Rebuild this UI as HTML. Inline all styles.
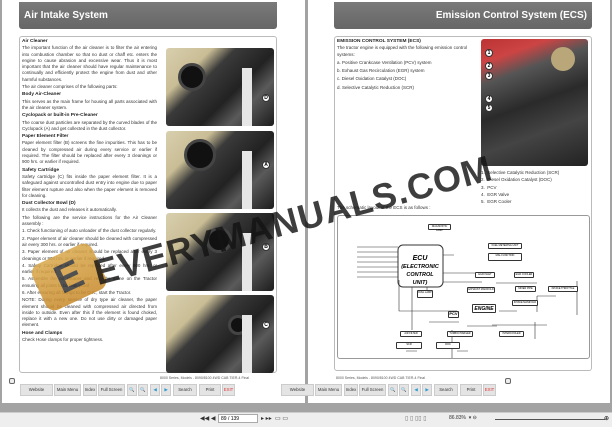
<!DOCTYPE html>
<html><head><meta charset="utf-8"><style>
*{margin:0;padding:0;box-sizing:border-box}
body{width:612px;height:427px;overflow:hidden;background:#a3a3a3;font-family:"Liberation Sans",sans-serif;position:relative}
.abs{position:absolute}
.page{position:absolute;top:0;background:#fff;height:403px}
.hdr{position:absolute;top:2px;height:27px;background:linear-gradient(#7a7a7a,#666);border-radius:0 0 3px 3px;color:#fff;font-weight:bold;font-size:10px;line-height:27px;padding:0 5px}
.box{position:absolute;border:1px solid #bbb;border-radius:3px}
.t{position:absolute;font-size:4.5px;line-height:6.3px;color:#333;text-align:justify}
.t b{font-size:4.8px;color:#222;display:block;margin-top:2px}
.t p{margin-bottom:1px}
.ph{position:absolute;border-radius:3px;overflow:hidden;background:linear-gradient(135deg,#d8cfae 0%,#c9bd95 25%,#3a3a3a 38%,#222 60%,#5a5a5a 75%,#1c1c1c 100%)}
.ph i{position:absolute;background:#e6e6e6;width:10px;top:20px;bottom:0;right:22px}
.ph u{position:absolute;border-radius:50%;background:#111;border:3px solid #444}
.lab{position:absolute;width:8px;height:8px;border-radius:50%;background:#fff;border:1px solid #333;font-size:5px;line-height:6px;text-align:center;font-weight:bold}
.tb{position:absolute;top:384px;height:12px}
.tb span{position:absolute;top:0;height:12px;background:#e4e4e4;border:1px solid #ccc;font-size:4.3px;line-height:10px;color:#333;text-align:center;white-space:nowrap;overflow:hidden}
.ft{position:absolute;top:376px;font-size:3.5px;color:#555}
.d{position:absolute;border:0.6px solid #333;border-radius:1px;font-size:2.5px;text-align:center;background:#fff;line-height:4px}
</style></head><body>
<!-- left page -->
<div class="page" style="left:2px;width:303px"></div>
<div class="hdr" style="left:19px;width:258px">Air Intake System</div>
<div class="box" style="left:19px;top:36px;width:258px;height:337px"></div>
<div class="t" style="left:22px;top:39px;width:135px">
<b style="margin-top:0">Air Cleaner</b>
<p>The important function of the air cleaner is to filter the air entering into combustion chamber so that no dust or chaff etc. enters the engine to cause abrasion and excessive wear. Thus it is most important that the air cleaner should have regular maintenance to continually and efficiently protect the engine from dust and other harmful substances.</p>
<p>The air cleaner comprises of the following parts:</p>
<b>Body Air-Cleaner</b>
<p>This serves as the main frame for housing all parts associated with the air cleaner system.</p>
<b>Cyclopack or built-in Pre-Cleaner</b>
<p>The coarse dust particles are separated by the curved blades of the Cyclopack (A) and get collected in the dust collector.</p>
<b>Paper Element Filter</b>
<p>Paper element filter (B) screens the fine impurities. This has to be cleaned by compressed air during every service or earlier if required. The filter should be replaced after every 3 cleanings or 900 hrs. or earlier if required.</p>
<b>Safety Cartridge</b>
<p>Safety cartridge (C) fits inside the paper element filter. It is a safeguard against uncontrolled dust entry into engine due to paper filter element rupture and also when the paper element is removed for cleaning.</p>
<b>Dust Collector Bowl (D)</b>
<p>It collects the dust and releases it automatically.</p>
<p>The following are the service instructions for the Air Cleaner assembly :</p>
<p>1. Check functioning of auto unloader of the dust collector regularly.</p>
<p>2. Paper element of air cleaner should be cleaned with compressed air every 300 hrs. or earlier if required.</p>
<p>3. Paper element of air cleaner should be replaced after every 3 cleanings or 900 hrs. or earlier if required.</p>
<p>4. Safety Cartridge should be replaced after every 900 hrs. or earlier if required.</p>
<p>5. Assemble the air cleaner and refit the same on the Tractor ensuring all joints to be leak-proof.</p>
<p>6. After ensuring all fittings to be O.K., start the Tractor.</p>
<p>NOTE: During every service of dry type air cleaner, the paper element should be cleaned with compressed air directed from inside to outside. Even after this if the element is found choked, replace it with a new one. Do not use dirty or damaged paper element.</p>
<b>Hose and Clamps</b>
<p>Check Hose clamps for proper tightness.</p>
</div>
<div class="ph" style="left:166px;top:48px;width:108px;height:78px"><u style="left:12px;top:15px;width:28px;height:28px"></u><i></i><div class="lab" style="left:96px;top:46px">D</div></div>
<div class="ph" style="left:166px;top:131px;width:108px;height:78px"><u style="left:18px;top:8px;width:32px;height:32px"></u><i></i><div class="lab" style="left:96px;top:30px">A</div></div>
<div class="ph" style="left:166px;top:213px;width:108px;height:78px"><u style="left:40px;top:14px;width:26px;height:26px"></u><i></i><div class="lab" style="left:96px;top:30px">B</div></div>
<div class="ph" style="left:166px;top:295px;width:108px;height:78px"><u style="left:62px;top:20px;width:20px;height:20px"></u><i></i><div class="lab" style="left:96px;top:26px">C</div></div>
<div class="ft" style="left:160px">8000 Series, Models - 8090/8100 4WD CAB TIER-4 Final</div>
<div class="abs" style="left:9px;top:378px;width:6px;height:6px;border:1px solid #666;border-radius:2px;background:#eee"></div>
<div class="tb" style="left:20px">
<span style="left:0;width:33px">Website</span><span style="left:34px;width:27px">Main Menu</span><span style="left:63px;width:14px">Index</span><span style="left:78px;width:27px">Full Screen</span><span style="left:107px;width:10px">🔍</span><span style="left:118px;width:10px">🔍</span><span style="left:130px;width:10px;color:#39c">◀</span><span style="left:141px;width:10px;color:#39c">▶</span><span style="left:153px;width:24px">Search</span><span style="left:179px;width:22px">Print</span><span style="left:202px;width:13px;color:#d33">EXIT</span></div>

<!-- right page -->
<div class="page" style="left:308px;width:302px"></div>
<div class="hdr" style="left:334px;width:258px;text-align:right">Emission Control System (ECS)</div>
<div class="box" style="left:334px;top:36px;width:258px;height:335px"></div>
<div class="t" style="left:337px;top:39px;width:135px;text-align:left">
<b style="margin-top:0">EMISSION CONTROL SYSTEM (ECS)</b>
<p>The tractor engine is equipped with the following emission control systems:</p>
<p style="margin-top:2px">a. Positive Crankcase Ventilation (PCV) system</p>
<p style="margin-top:2px">b. Exhaust Gas Recirculation (EGR) system</p>
<p style="margin-top:2px">c. Diesel Oxidation Catalyst (DOC)</p>
<p style="margin-top:2px">d. Selective Catalytic Reduction (SCR)</p>
</div>
<div class="ph" style="left:481px;top:39px;width:107px;height:127px;background:linear-gradient(160deg,#b33 0%,#c44 15%,#555 28%,#2a2a2a 50%,#444 70%,#222 100%)">
<div class="lab" style="left:4px;top:10px">1</div><div class="lab" style="left:4px;top:23px">2</div><div class="lab" style="left:4px;top:33px">3</div><div class="lab" style="left:4px;top:56px">4</div><div class="lab" style="left:4px;top:65px">5</div>
<div class="abs" style="left:70px;top:8px;width:24px;height:24px;border-radius:50%;background:#b9a77a"></div></div>
<div class="t" style="left:481px;top:170px;width:110px;text-align:left">
<p>1.&nbsp; Selective Catalytic Reduction (SCR)</p><p>2.&nbsp; Diesel Oxidation Catalyst (DOC)</p><p>3.&nbsp; PCV</p><p>4.&nbsp; EGR Valve</p><p>5.&nbsp; EGR Cooler</p></div>
<div class="t" style="left:337px;top:205px">The schematic layout of the ECS is as follows :</div>
<div class="box" style="left:337px;top:215px;width:253px;height:144px;border-color:#999"></div>
<svg class="abs" style="left:337px;top:215px" width="253" height="144">
<g stroke="#333" stroke-width="0.6" fill="none">
<rect x="61" y="30" width="45" height="42" rx="5" stroke-width="1"/>
<path d="M20 32H61M20 37H61M20 42H61M20 47H61M20 52H61M20 57H61M20 62H61"/>
<path d="M106 40H117M106 58H145M145 58V63M106 67H145M159 68H200M200 81H219M75 72V115M90 72V79M62 65V96H120M122 107H92M69 136H80M131 136H120M130 111H160M115 115V143M200 81V97M198 107V124M180 96H162M240 66V100M155 110H210"/>
</g>
<text x="83" y="45" font-size="7" font-weight="bold" font-style="italic" text-anchor="middle" font-family="Liberation Sans">ECU</text>
<text x="83" y="53" font-size="5.5" font-weight="bold" font-style="italic" text-anchor="middle" font-family="Liberation Sans">(ELECTRONIC</text>
<text x="83" y="61" font-size="5.5" font-weight="bold" font-style="italic" text-anchor="middle" font-family="Liberation Sans">CONTROL</text>
<text x="83" y="69" font-size="5.5" font-weight="bold" font-style="italic" text-anchor="middle" font-family="Liberation Sans">UNIT)</text>
</svg>
<div class="d" style="left:428px;top:224px;width:23px;height:6px">DIAGNOSTIC LAMP</div>
<div class="d" style="left:488px;top:243px;width:34px;height:6px">FUEL METERING UNIT</div>
<div class="d" style="left:488px;top:253px;width:34px;height:8px">MAL FUNCTION</div>
<div class="d" style="left:475px;top:272px;width:20px;height:6px">EGR INLET</div>
<div class="d" style="left:514px;top:272px;width:20px;height:6px">EGR COOLER</div>
<div class="d" style="left:515px;top:286px;width:21px;height:6px">MIXER PIPE</div>
<div class="d" style="left:548px;top:286px;width:30px;height:6px">INTAKE THROTTLE</div>
<div class="d" style="left:467px;top:287px;width:28px;height:6px">EXHAUST MANIFOLD</div>
<div class="d" style="left:512px;top:300px;width:26px;height:6px">INTAKE MANIFOLD</div>
<div class="d" style="left:472px;top:304px;width:24px;height:9px;font-size:5px;font-weight:bold;font-style:italic;line-height:8px">ENGINE</div>
<div class="d" style="left:448px;top:311px;width:11px;height:7px;font-size:4px;font-weight:bold">PCV</div>
<div class="d" style="left:447px;top:331px;width:26px;height:6px">TURBOCHARGER</div>
<div class="d" style="left:400px;top:331px;width:22px;height:6px">AIR FILTER</div>
<div class="d" style="left:499px;top:331px;width:25px;height:6px">INTERCOOLER</div>
<div class="d" style="left:396px;top:342px;width:26px;height:7px">SCR</div>
<div class="d" style="left:436px;top:342px;width:24px;height:7px">DOC</div>
<div class="d" style="left:417px;top:290px;width:16px;height:8px">DIAG LAMP</div>
<div class="ft" style="left:336px">8000 Series, Models - 8090/8100 4WD CAB TIER-4 Final</div>
<div class="abs" style="left:505px;top:378px;width:6px;height:6px;border:1px solid #666;border-radius:2px;background:#eee"></div>
<div class="tb" style="left:281px">
<span style="left:0;width:33px">Website</span><span style="left:34px;width:27px">Main Menu</span><span style="left:63px;width:14px">Index</span><span style="left:78px;width:27px">Full Screen</span><span style="left:107px;width:10px">🔍</span><span style="left:118px;width:10px">🔍</span><span style="left:130px;width:10px;color:#39c">◀</span><span style="left:141px;width:10px;color:#39c">▶</span><span style="left:153px;width:24px">Search</span><span style="left:179px;width:22px">Print</span><span style="left:202px;width:13px;color:#d33">EXIT</span></div>

<!-- watermark -->
<div class="abs" style="left:36px;top:252px;width:66px;height:50px;background:linear-gradient(#d9a84a,#c88a2a);opacity:.85;border-radius:10px;transform:rotate(-25deg)"><div style="font-size:40px;font-weight:bold;color:#333;line-height:50px;text-align:center">E</div></div>
<div class="abs" style="left:100px;top:252px;height:41px;line-height:41px;font-size:36px;font-weight:bold;color:rgba(20,20,20,.82);transform:rotate(-15deg);transform-origin:left bottom;white-space:nowrap;letter-spacing:1px">EVERYMANUALS.COM</div>

<!-- bottom bar -->
<div class="abs" style="left:0;top:412px;width:612px;height:15px;background:#eeeeee;border-top:1px solid #ccc"></div>
<div class="abs" style="left:200px;top:415px;font-size:6px;color:#333">◀◀ ◀</div>
<div class="abs" style="left:218px;top:414px;width:40px;height:9px;border:1px solid #aaa;background:#fff;font-size:5px;line-height:8px;padding-left:2px">89 / 139</div>
<div class="abs" style="left:261px;top:415px;font-size:6px;color:#333">▸ ▸▸ &nbsp;▭ ▭</div>
<div class="abs" style="left:405px;top:415px;font-size:6px;color:#777">▯ ▯ ▯▯ ▯</div>
<div class="abs" style="left:449px;top:415px;font-size:5px;color:#333">86.83% &nbsp;▾ ⊖</div>
<div class="abs" style="left:495px;top:419px;width:110px;height:1px;background:#555"></div>
<div class="abs" style="left:604px;top:415px;font-size:6px">⊕</div>
</body></html>
